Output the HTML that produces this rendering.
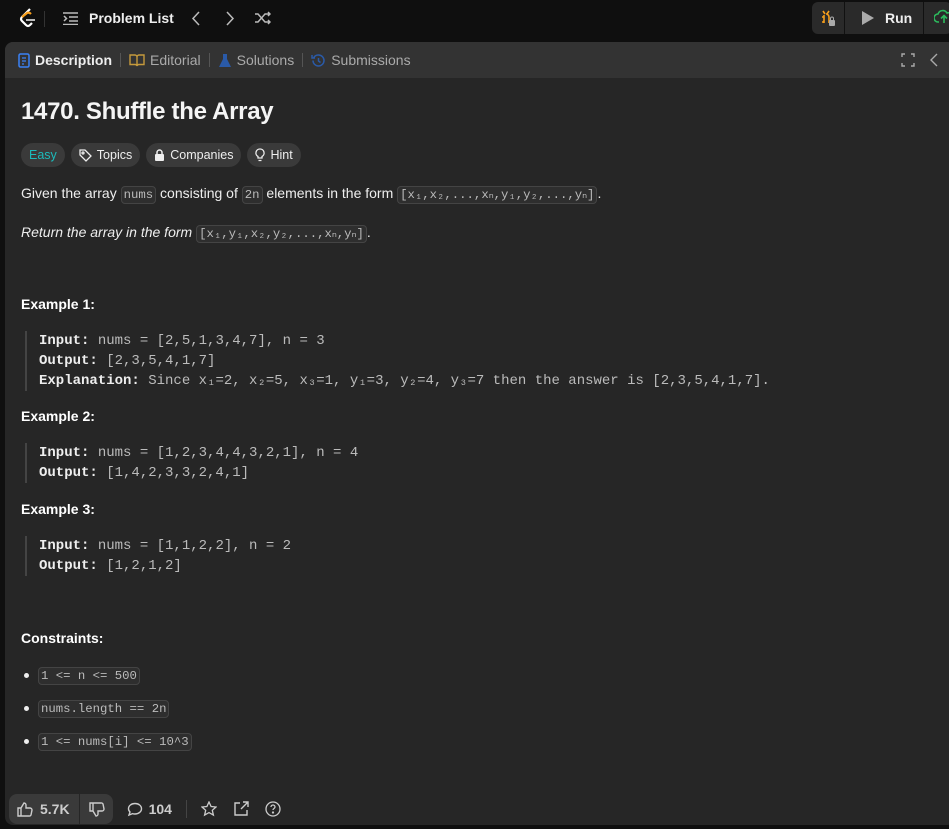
<!DOCTYPE html>
<html><head><meta charset="utf-8"><style>
*{box-sizing:border-box;margin:0;padding:0}
body{width:949px;height:829px;background:#0f0f0f;font-family:"Liberation Sans",sans-serif;color:#eee;overflow:hidden;position:relative}
.top{position:absolute;left:0;top:0;width:949px;height:38px}
.panel{position:absolute;left:5px;top:42px;width:950px;height:783px;background:#262626;border-radius:8px;overflow:hidden}
.tabs{height:36px;background:#333;display:flex;align-items:center;padding-left:13px;font-size:14px;color:#aaa}
.tabs span.t{display:flex;align-items:center;gap:5px}
.sep{width:1px;height:14px;background:#555;margin:0 8px}
.content{padding:0 16px;position:relative}
h1{font-size:24px;font-weight:bold;color:#f5f5f5;margin-top:20px;letter-spacing:-0.3px}
.tags{display:flex;gap:6px;margin-top:17px}
.tag{height:24px;border-radius:12px;background:#3a3a3a;font-size:12.5px;color:#eee;display:flex;align-items:center;padding:0 8px;gap:5px}
p{font-size:14px;line-height:20px;color:#eee}
code{font-family:"Liberation Mono",monospace;font-size:12.3px;color:#bbb;background:#2e2e2e;border:1px solid #444;border-radius:4px;padding:1px 2px}
h3{font-size:14px;font-weight:bold;color:#fff}
pre{font-family:"Liberation Mono",monospace;font-size:14px;line-height:20px;color:#bbb;border-left:2px solid #444;padding-left:12px;margin-left:4px}
pre b{color:#eee}
ul{list-style:none}
li{font-size:14px;position:relative;padding-left:17px;height:33px}
li:before{content:"";position:absolute;left:3px;top:7px;width:5px;height:5px;border-radius:50%;background:#eee}
.foot{position:absolute;left:4px;top:752px;display:flex;align-items:center;font-size:14px;color:#ccc}
</style></head><body>
<div class="top">
<svg style="position:absolute;left:17px;top:7px" width="22" height="22" viewBox="0 0 22 22"><path d="M13 2 L5 10 Q3 12 5 14 L9 18 Q11 20 13 18 L15 16" stroke="#fff" stroke-width="2.2" fill="none"/><path d="M9 13 H18" stroke="#bbb" stroke-width="2"/><path d="M5 10 L10 6 Q12 5 14 7" stroke="#f89f1b" stroke-width="2.2" fill="none"/></svg>
<div style="position:absolute;left:44px;top:11px;width:1px;height:16px;background:#333"></div>
<svg style="position:absolute;left:63px;top:12px" width="15" height="13" viewBox="0 0 15 13" stroke="#bbb" stroke-width="1.5" fill="none"><path d="M0 1H15M6 5H15M6 9H15M0 12.5H15M1 4l2.5 2.5L1 9"/></svg>
<div style="position:absolute;left:89px;top:10px;font-size:14px;font-weight:bold;color:#eee">Problem List</div>
<svg style="position:absolute;left:190px;top:11px" width="60" height="15" viewBox="0 0 60 15" stroke="#bbb" stroke-width="1.5" fill="none"><path d="M9 1L3 7.5 9 14M37 1l6 6.5L37 14"/></svg>
<svg style="position:absolute;left:255px;top:11px" width="16" height="14" viewBox="0 0 16 14" stroke="#bbb" stroke-width="1.5" fill="none"><path d="M0 3h3l7 8h5M0 11h3l7-8h5M13 1l2 2-2 2M13 9l2 2-2 2"/></svg>
<div style="position:absolute;left:812px;top:2px;width:140px;height:32px;background:#2a2a2a;border-radius:6px"></div>
<div style="position:absolute;left:844px;top:2px;width:1px;height:32px;background:#111"></div>
<div style="position:absolute;left:923px;top:2px;width:1px;height:32px;background:#111"></div>
<svg style="position:absolute;left:820px;top:9px" width="16" height="18" viewBox="0 0 16 18"><path d="M3 2l2 3M9 2l-2 3M2 8h2M2 13h2M6 5a3 3 0 013 3v6M4 6v8" stroke="#f89f1b" stroke-width="1.6" fill="none"/><rect x="9" y="11" width="6" height="6" rx="1" fill="#aaa"/><path d="M10.5 11V9.5a1.5 1.5 0 013 0V11" stroke="#aaa" fill="none"/></svg>
<svg style="position:absolute;left:861px;top:11px" width="13" height="14"><path d="M1 0L13 7 1 14Z" fill="#aaa"/></svg>
<div style="position:absolute;left:885px;top:10px;font-size:14px;font-weight:bold;color:#eee">Run</div>
<svg style="position:absolute;left:934px;top:9px" width="20" height="16" viewBox="0 0 20 16" stroke="#2cbb5d" stroke-width="1.6" fill="none"><path d="M5 13H4a4 4 0 010-8 5 5 0 019-1 4 4 0 013 9h-1M10 14V7M7 9.5l3-3 3 3"/></svg>
</div>
<div class="panel">
<div class="tabs">
<span class="t" style="color:#eee;font-weight:bold"><svg width="12" height="15" viewBox="0 0 12 15"><rect x="1" y="1" width="10" height="13" rx="1.5" stroke="#3b82f6" stroke-width="1.5" fill="none"/><path d="M4 5h4M4 8h4M4 11h2" stroke="#3b82f6" stroke-width="1.2"/></svg>Description</span><span class="sep"></span>
<span class="t"><svg width="16" height="13" viewBox="0 0 16 13" stroke="#c59a3c" stroke-width="1.4" fill="none"><path d="M1 1h5a2 2 0 012 2v9a2 2 0 00-2-1.5H1zM15 1h-5a2 2 0 00-2 2v9a2 2 0 012-1.5h5z"/></svg>Editorial</span><span class="sep"></span>
<span class="t"><svg width="14" height="15" viewBox="0 0 14 15"><path d="M4 1h6M5 1v5L1 14h12L9 6V1" fill="#2a5aa8"/></svg>Solutions</span><span class="sep"></span>
<span class="t"><svg width="15" height="15" viewBox="0 0 15 15" stroke="#2a5aa8" stroke-width="1.5" fill="none"><path d="M2 7.5a5.5 5.5 0 105.5-5.5A5.5 5.5 0 002.5 5M1 2v3h3M7.5 5v3l2 1.5"/></svg>Submissions</span>
<svg style="position:absolute;left:896px;top:11px" width="14" height="14" viewBox="0 0 14 14" stroke="#aaa" stroke-width="1.4" fill="none"><path d="M1 4V1h3M10 1h3v3M13 10v3h-3M4 13H1v-3"/></svg>
<svg style="position:absolute;left:925px;top:11px" width="8" height="14" viewBox="0 0 8 14" stroke="#aaa" stroke-width="1.4" fill="none"><path d="M7 1L1 7l6 6"/></svg>
</div>
<div class="content">
<h1>1470. Shuffle the Array</h1>
<div class="tags">
<div class="tag" style="color:#1cbaba">Easy</div>
<div class="tag"><svg width="13" height="13" viewBox="0 0 13 13" stroke="#eee" stroke-width="1.3" fill="none"><path d="M1 1h5l6 6-5 5-6-6z"/><circle cx="4" cy="4" r="1"/></svg>Topics</div>
<div class="tag"><svg width="11" height="12" viewBox="0 0 11 12"><rect x="1" y="5" width="9" height="7" rx="1" fill="#eee"/><path d="M3 5V3.5a2.5 2.5 0 015 0V5" stroke="#eee" stroke-width="1.5" fill="none"/></svg>Companies</div>
<div class="tag"><svg width="10" height="14" viewBox="0 0 10 14" stroke="#eee" stroke-width="1.3" fill="none"><path d="M5 1a4 4 0 00-2 7.5V10h4V8.5A4 4 0 005 1zM3.5 12.5h3"/></svg>Hint</div>
</div>
<p style="margin-top:16px">Given the array <code>nums</code> consisting of <code>2n</code> elements in the form <code>[x₁,x₂,...,xₙ,y₁,y₂,...,yₙ]</code>.</p>
<p style="margin-top:17px"><i>Return the array in the form</i> <code>[x₁,y₁,x₂,y₂,...,xₙ,yₙ]</code>.</p>
<h3 style="margin-top:52px">Example 1:</h3>
<pre style="margin-top:19px"><b>Input:</b> nums = [2,5,1,3,4,7], n = 3
<b>Output:</b> [2,3,5,4,1,7]
<b>Explanation:</b> Since x₁=2, x₂=5, x₃=1, y₁=3, y₂=4, y₃=7 then the answer is [2,3,5,4,1,7].</pre>
<h3 style="margin-top:17px">Example 2:</h3>
<pre style="margin-top:19px"><b>Input:</b> nums = [1,2,3,4,4,3,2,1], n = 4
<b>Output:</b> [1,4,2,3,3,2,4,1]</pre>
<h3 style="margin-top:18px">Example 3:</h3>
<pre style="margin-top:19px"><b>Input:</b> nums = [1,1,2,2], n = 2
<b>Output:</b> [1,2,1,2]</pre>
<h3 style="margin-top:54px">Constraints:</h3>
<ul style="margin-top:20px">
<li><code>1 &lt;= n &lt;= 500</code></li>
<li><code>nums.length == 2n</code></li>
<li><code>1 &lt;= nums[i] &lt;= 10^3</code></li>
</ul>
</div>
<div class="foot">
<div style="background:#3a3a3a;border-radius:8px;height:30px;display:flex;align-items:center;padding:0 8px;gap:7px">
<svg width="16" height="15" viewBox="0 0 16 15" stroke="#ccc" stroke-width="1.4" fill="none"><path d="M1 6h3v8H1zM4 6l3-5a2 2 0 012 2v3h4a2 2 0 012 2l-1 5a2 2 0 01-2 1H4"/></svg>
<b>5.7K</b><span style="width:1px;height:30px;background:#262626;margin:0 2px"></span>
<svg width="16" height="15" viewBox="0 0 16 15" stroke="#ccc" stroke-width="1.4" fill="none"><path d="M1 1h3v8H1zM4 9l3 5a2 2 0 002-2V9h4a2 2 0 002-2l-1-5a2 2 0 00-2-1H4"/></svg></div>
<svg style="margin-left:14px" width="16" height="15" viewBox="0 0 16 15" stroke="#ccc" stroke-width="1.4" fill="none"><path d="M8 1.5c3.6 0 6.5 2.3 6.5 5.2S11.6 12 8 12c-.9 0-1.7-.1-2.4-.4L2 13l1-3C2 9 1.5 8 1.5 6.7 1.5 3.8 4.4 1.5 8 1.5z"/></svg>
<b style="margin-left:6px">104</b>
<span style="width:1px;height:18px;background:#444;margin:0 14px"></span>
<svg width="16" height="16" viewBox="0 0 16 16" stroke="#ccc" stroke-width="1.3" fill="none"><path d="M8 1l2.1 4.5 4.9.5-3.7 3.3 1.1 4.8L8 11.6 3.6 14.1l1.1-4.8L1 6l4.9-.5z"/></svg>
<svg style="margin-left:16px" width="16" height="16" viewBox="0 0 16 16" stroke="#ccc" stroke-width="1.4" fill="none"><path d="M7 2H2v12h12V9M10 1h5v5M15 1L8 8"/></svg>
<svg style="margin-left:16px" width="16" height="16" viewBox="0 0 16 16" stroke="#ccc" stroke-width="1.3" fill="none"><circle cx="8" cy="8" r="7"/><path d="M6 6a2 2 0 114 0c0 1.5-2 1.5-2 3"/><circle cx="8" cy="11.5" r=".5" fill="#ccc"/></svg>
</div>
</div>
</body></html>
